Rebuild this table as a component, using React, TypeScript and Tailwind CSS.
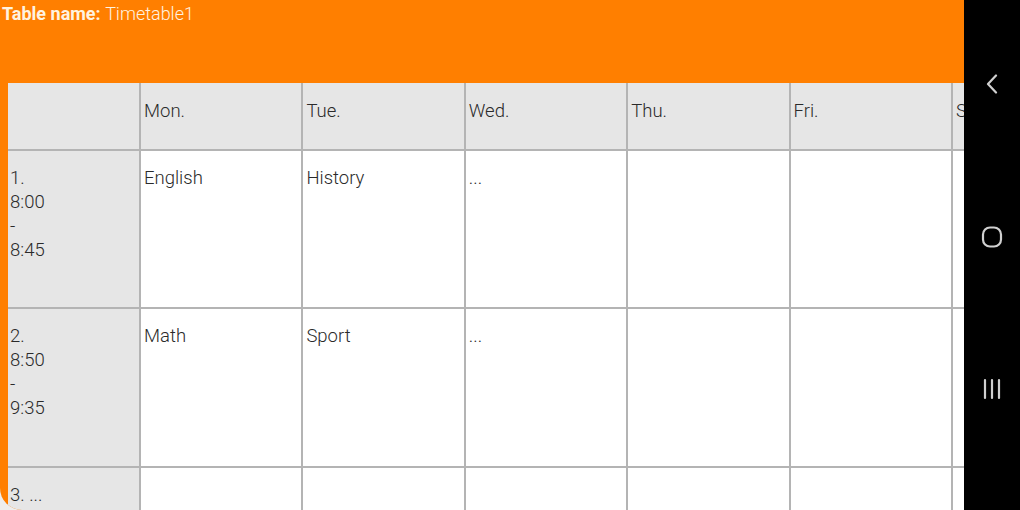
import React from "react";

const days = ["Mon.", "Tue.", "Wed.", "Thu.", "Fri.", "Sat."];

const rows = [
  { label: ["1.", "8:00", "-", "8:45"], cells: ["English", "History", "...", "", "", ""] },
  { label: ["2.", "8:50", "-", "9:35"], cells: ["Math", "Sport", "...", "", "", ""] },
  { label: ["3. ..."], cells: ["", "", "", "", "", ""] },
];

const cell = "border-r-2 border-b-2 border-[#b4b4b4] overflow-hidden";

export default function App() {
  return (
    <div
      className="flex w-[1020px] h-[510px] overflow-hidden bg-[#eeeeee]"
      style={{ fontFamily: "Roboto, 'Liberation Sans', sans-serif" }}
    >
      <div className="flex flex-col w-[964px] h-full bg-[#ff7f00] rounded-bl-[22px] overflow-hidden">
        <div className="h-[83px] shrink-0 px-[2px] pt-[2px] text-[18px] leading-[24px] text-[#fff3e0]">
          <span className="font-bold">Table name:</span> <span className="font-light">Timetable1</span>
        </div>
        <div className="flex-1 pl-[8px] overflow-hidden">
          <div className="grid grid-cols-[133px_repeat(5,162.4px)_120px] grid-rows-[68px_158px_159px_80px] text-[18.5px] leading-[24px] font-light text-[#2a2a2a]">
            <div className={`${cell} bg-[#e6e6e6]`} />
            {days.map((d) => (
              <div key={d} className={`${cell} bg-[#e6e6e6] pt-[16px] pl-[3px] whitespace-nowrap`}>
                {d}
              </div>
            ))}
            {rows.map((r, i) => (
              <React.Fragment key={i}>
                <div className={`${cell} bg-[#e6e6e6] pt-[15px] pl-[2px]`}>
                  {r.label.map((l, j) => (
                    <div key={j}>{l}</div>
                  ))}
                </div>
                {r.cells.map((c, j) => (
                  <div key={j} className={`${cell} bg-white pt-[15px] pl-[3px]`}>
                    {c}
                  </div>
                ))}
              </React.Fragment>
            ))}
          </div>
        </div>
      </div>
      <div className="flex flex-col items-center w-[56px] h-full bg-black text-[#d0d0d0]">
        <svg className="mt-[74px]" width="14" height="20" viewBox="0 0 14 20" fill="none">
          <path d="M11 1.5 L3 10 L11 18.5" stroke="currentColor" strokeWidth="2.2" strokeLinecap="round" strokeLinejoin="round" />
        </svg>
        <svg className="mt-[132px]" width="22" height="22" viewBox="0 0 22 22" fill="none">
          <rect x="2" y="1.5" width="18" height="19" rx="7" stroke="currentColor" strokeWidth="2.2" />
        </svg>
        <svg className="mt-[130px]" width="20" height="22" viewBox="0 0 20 22" fill="none">
          <path d="M3 2 V20 M10 2 V20 M17 2 V20" stroke="currentColor" strokeWidth="2.2" strokeLinecap="round" />
        </svg>
      </div>
    </div>
  );
}
